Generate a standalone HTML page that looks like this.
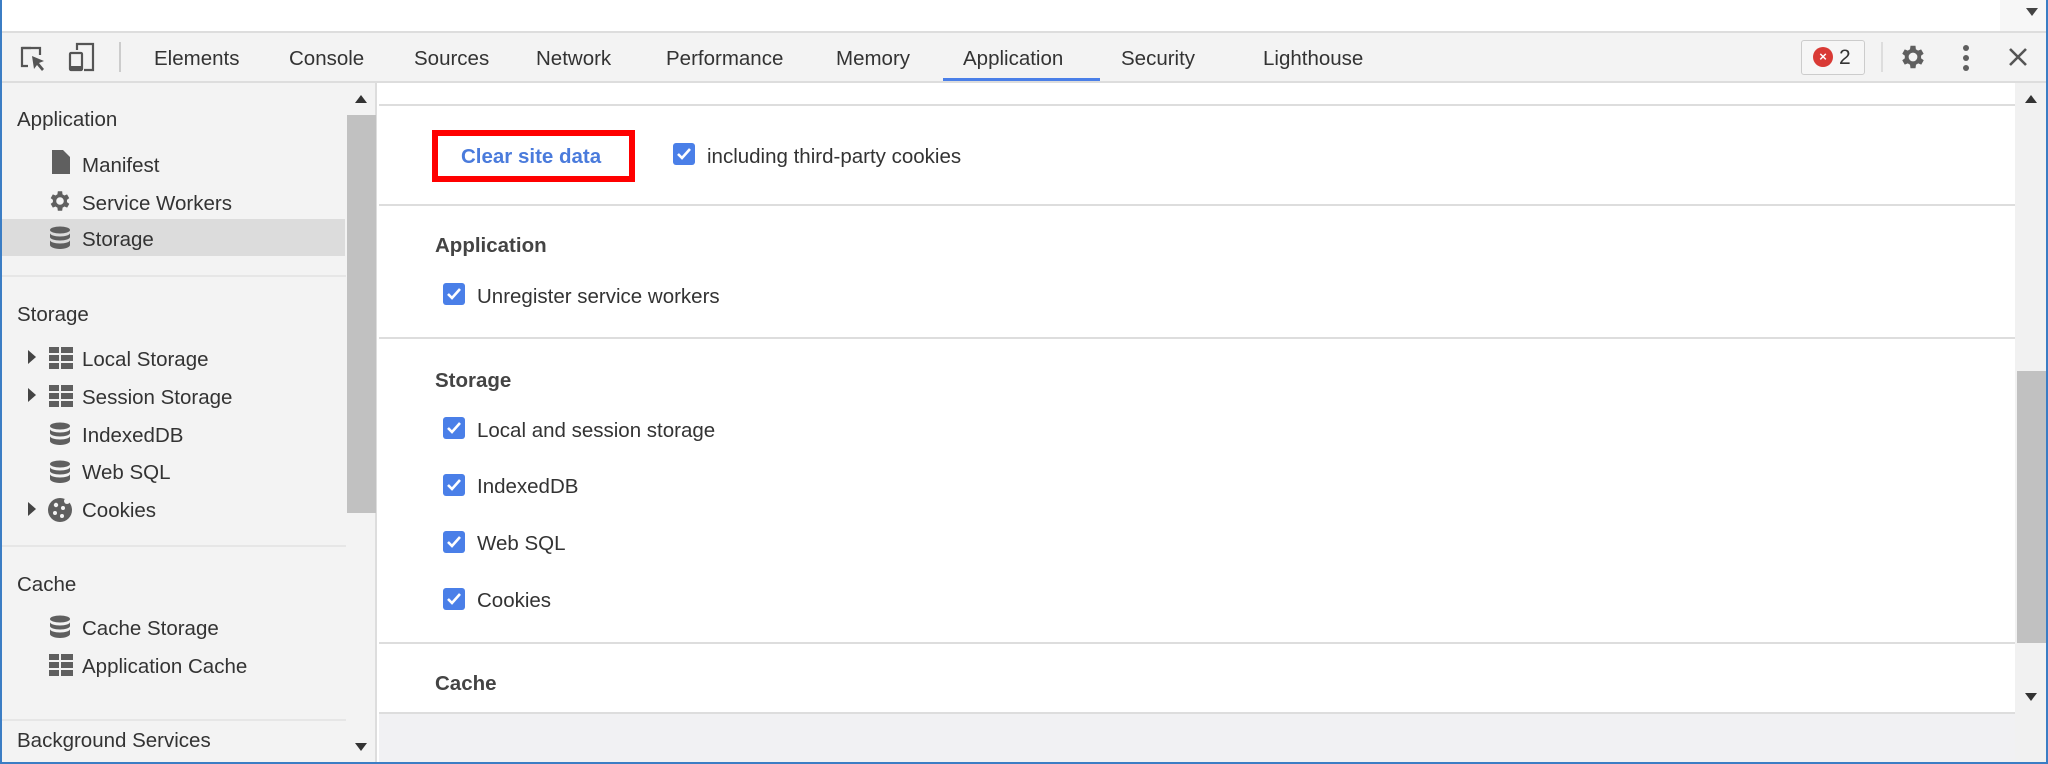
<!DOCTYPE html>
<html><head><meta charset="utf-8"><style>
*{box-sizing:border-box;margin:0;padding:0}
body{width:2048px;height:764px;overflow:hidden;background:#fff;font-family:"Liberation Sans",sans-serif;color:#333;position:relative}
.abs{position:absolute}
.t{position:absolute;white-space:nowrap;font-size:20.5px;line-height:24px;margin-top:2px}
.tab{position:absolute;top:47px;font-size:20.5px;color:#333;white-space:nowrap}
.side{position:absolute;font-size:20.5px;color:#333;white-space:nowrap;line-height:24px;margin-top:2px}
.cb{position:absolute;width:22px;height:22px;background:#4a7fe8;border-radius:3px}
.cb svg{position:absolute;left:3px;top:3px}
.h{position:absolute;font-weight:bold;font-size:20.5px;color:#444;margin-top:2px}
.hr{position:absolute;left:379px;width:1636px;height:2px;background:#ddd}
.sep{position:absolute;left:0;width:346px;height:2px;background:#e6e6e6}
</style></head><body>
<div class="abs" style="left:0;top:0;width:2048px;height:31px;background:#fff"></div>
<div class="abs" style="left:2000px;top:0;width:46px;height:31px;background:#f7f7f7"></div>
<svg class="abs" style="left:2025px;top:7px" width="14" height="10"><path d="M1 1h12L7 9z" fill="#444"/></svg>
<div class="abs" style="left:0;top:31px;width:2048px;height:52px;background:#f3f3f3;border-top:2px solid #ddd;border-bottom:2px solid #ddd"></div>
<svg class="abs" style="left:19px;top:44px" width="30" height="30" viewBox="0 0 30 30"><path d="M12 4H3v18h6" fill="none" stroke="#555" stroke-width="2.2"/><path d="M3 4h18v7" fill="none" stroke="#555" stroke-width="2.2"/><path d="M13 12l12 5-5 2 5 6-2 2-5-6-3 4z" fill="#555"/></svg>
<svg class="abs" style="left:66px;top:41px" width="32" height="32" viewBox="0 0 32 32"><path d="M11 9V3h16v26H18" fill="none" stroke="#555" stroke-width="2.2"/><rect x="4" y="12" width="12" height="17" rx="1" fill="none" stroke="#555" stroke-width="2.2"/><rect x="5" y="25" width="10" height="3" fill="#555"/></svg>
<div class="abs" style="left:119px;top:42px;width:2px;height:30px;background:#ccc"></div>
<div class="tab" style="left:154px">Elements</div>
<div class="tab" style="left:289px">Console</div>
<div class="tab" style="left:414px">Sources</div>
<div class="tab" style="left:536px">Network</div>
<div class="tab" style="left:666px">Performance</div>
<div class="tab" style="left:836px">Memory</div>
<div class="tab" style="left:963px">Application</div>
<div class="tab" style="left:1121px">Security</div>
<div class="tab" style="left:1263px">Lighthouse</div>
<div class="abs" style="left:943px;top:78px;width:157px;height:3px;background:#4a7fe8"></div>
<div class="abs" style="left:1801px;top:40px;width:64px;height:35px;border:1px solid #ccc;border-radius:3px;background:#f6f6f6"></div>
<div class="abs" style="left:1813px;top:47px;width:20px;height:20px;border-radius:50%;background:#d93a35;color:#fff;font-size:13px;line-height:20px;text-align:center;font-weight:bold">×</div>
<div class="abs" style="left:1839px;top:46px;font-size:21px;color:#333">2</div>
<div class="abs" style="left:1881px;top:42px;width:2px;height:30px;background:#ddd"></div>
<svg class="abs" style="left:1898px;top:42px" width="30" height="30" viewBox="0 0 24 24"><path fill="#5f5f5f" d="M19.4 13a7.5 7.5 0 000-2l2.1-1.6-2-3.5-2.5 1a7.3 7.3 0 00-1.700-1L15 3h-4l-.4 2.9a7.3 7.3 0 00-1.7 1l-2.5-1-2 3.5L6.5 11a7.5 7.5 0 000 2l-2.1 1.6 2 3.5 2.5-1a7.3 7.3 0 001.7 1L11 21h4l.4-2.9a7.3 7.3 0 001.7-1l2.5 1 2-3.5zM13 15.5a3.5 3.5 0 110-7 3.5 3.5 0 010 7z" transform="translate(-1 0)"/></svg>
<div class="abs" style="left:1963px;top:45px;width:6px;height:6px;border-radius:50%;background:#5f5f5f;box-shadow:0 10px 0 #5f5f5f,0 20px 0 #5f5f5f"></div>
<svg class="abs" style="left:2008px;top:47px" width="20" height="20"><path d="M2 2l16 16M18 2L2 18" stroke="#555" stroke-width="2.6"/></svg>
<div class="abs" style="left:0;top:83px;width:346px;height:681px;background:#f3f3f3"></div>
<div class="abs" style="left:346px;top:83px;width:31px;height:681px;background:#f3f3f3;border-right:2px solid #ddd"></div>
<div class="abs" style="left:347px;top:115px;width:29px;height:398px;background:#c1c1c1"></div>
<svg class="abs" style="left:354px;top:94px" width="14" height="10"><path d="M1 9h12L7 1z" fill="#333"/></svg>
<svg class="abs" style="left:354px;top:742px" width="14" height="10"><path d="M1 1h12L7 9z" fill="#333"/></svg>
<div class="abs" style="left:0;top:219px;width:345px;height:37px;background:#dcdcdc"></div>
<div class="side" style="left:17px;top:106px">Application</div>
<svg class="abs" style="left:51px;top:149px" width="20" height="26"><path d="M1 1h11l7 7v17H1z" fill="#5f5f5f"/></svg>
<div class="side" style="left:82px;top:152px">Manifest</div>
<svg class="abs" style="left:47px;top:188px" width="26" height="26" viewBox="0 0 24 24"><path fill="#5f5f5f" d="M19.4 13a7.5 7.5 0 000-2l2.1-1.6-2-3.5-2.5 1a7.3 7.3 0 00-1.7-1L15 3h-4l-.4 2.9a7.3 7.3 0 00-1.7 1l-2.5-1-2 3.5L6.5 11a7.5 7.5 0 000 2l-2.1 1.6 2 3.5 2.5-1a7.3 7.3 0 001.7 1L11 21h4l.4-2.9a7.3 7.3 0 001.7-1l2.5 1 2-3.5zM13 15.5a3.5 3.5 0 110-7 3.5 3.5 0 010 7z" transform="translate(-1 0)"/></svg>
<div class="side" style="left:82px;top:190px">Service Workers</div>
<svg class="abs" style="left:49px;top:226px" width="22" height="24" viewBox="0 0 22 24"><ellipse cx="11" cy="4" rx="10" ry="3.5" fill="#5f5f5f"/><path d="M1 7c0 2 4.5 3.5 10 3.5S21 9 21 7v4c0 2-4.5 3.5-10 3.5S1 13 1 11zM1 14c0 2 4.5 3.5 10 3.5S21 16 21 14v5c0 2-4.5 4-10 4S1 21 1 19z" fill="#5f5f5f"/></svg>
<div class="side" style="left:82px;top:226px">Storage</div>
<div class="sep" style="top:275px"></div>
<div class="side" style="left:17px;top:301px">Storage</div>
<svg class="abs" style="left:27px;top:349px" width="10" height="16"><path d="M1 1l8 7-8 7z" fill="#444"/></svg>
<svg class="abs" style="left:49px;top:347px" width="24" height="22"><path d="M0 0h10v6H0zM12 0h12v6H12zM0 8h10v6H0zM12 8h12v6H12zM0 16h10v6H0zM12 16h12v6H12z" fill="#5f5f5f"/></svg>
<div class="side" style="left:82px;top:346px">Local Storage</div>
<svg class="abs" style="left:27px;top:387px" width="10" height="16"><path d="M1 1l8 7-8 7z" fill="#444"/></svg>
<svg class="abs" style="left:49px;top:385px" width="24" height="22"><path d="M0 0h10v6H0zM12 0h12v6H12zM0 8h10v6H0zM12 8h12v6H12zM0 16h10v6H0zM12 16h12v6H12z" fill="#5f5f5f"/></svg>
<div class="side" style="left:82px;top:384px">Session Storage</div>
<svg class="abs" style="left:49px;top:422px" width="22" height="24" viewBox="0 0 22 24"><ellipse cx="11" cy="4" rx="10" ry="3.5" fill="#5f5f5f"/><path d="M1 7c0 2 4.5 3.5 10 3.5S21 9 21 7v4c0 2-4.5 3.5-10 3.5S1 13 1 11zM1 14c0 2 4.5 3.5 10 3.5S21 16 21 14v5c0 2-4.5 4-10 4S1 21 1 19z" fill="#5f5f5f"/></svg>
<div class="side" style="left:82px;top:422px">IndexedDB</div>
<svg class="abs" style="left:49px;top:460px" width="22" height="24" viewBox="0 0 22 24"><ellipse cx="11" cy="4" rx="10" ry="3.5" fill="#5f5f5f"/><path d="M1 7c0 2 4.5 3.5 10 3.5S21 9 21 7v4c0 2-4.5 3.5-10 3.5S1 13 1 11zM1 14c0 2 4.5 3.5 10 3.5S21 16 21 14v5c0 2-4.5 4-10 4S1 21 1 19z" fill="#5f5f5f"/></svg>
<div class="side" style="left:82px;top:459px">Web SQL</div>
<svg class="abs" style="left:27px;top:501px" width="10" height="16"><path d="M1 1l8 7-8 7z" fill="#444"/></svg>
<svg class="abs" style="left:47px;top:497px" width="26" height="26" viewBox="0 0 26 26"><circle cx="13" cy="13" r="12" fill="#5f5f5f"/><circle cx="9" cy="8" r="2.2" fill="#f3f3f3"/><circle cx="16" cy="11" r="2" fill="#f3f3f3"/><circle cx="8" cy="16" r="2" fill="#f3f3f3"/><circle cx="15" cy="19" r="2" fill="#f3f3f3"/><circle cx="20" cy="4" r="3" fill="#f3f3f3"/></svg>
<div class="side" style="left:82px;top:497px">Cookies</div>
<div class="sep" style="top:545px"></div>
<div class="side" style="left:17px;top:571px">Cache</div>
<svg class="abs" style="left:49px;top:615px" width="22" height="24" viewBox="0 0 22 24"><ellipse cx="11" cy="4" rx="10" ry="3.5" fill="#5f5f5f"/><path d="M1 7c0 2 4.5 3.5 10 3.5S21 9 21 7v4c0 2-4.5 3.5-10 3.5S1 13 1 11zM1 14c0 2 4.5 3.5 10 3.5S21 16 21 14v5c0 2-4.5 4-10 4S1 21 1 19z" fill="#5f5f5f"/></svg>
<div class="side" style="left:82px;top:615px">Cache Storage</div>
<svg class="abs" style="left:49px;top:654px" width="24" height="22"><path d="M0 0h10v6H0zM12 0h12v6H12zM0 8h10v6H0zM12 8h12v6H12zM0 16h10v6H0zM12 16h12v6H12z" fill="#5f5f5f"/></svg>
<div class="side" style="left:82px;top:653px">Application Cache</div>
<div class="sep" style="top:719px"></div>
<div class="side" style="left:17px;top:727px">Background Services</div>
<div class="abs" style="left:379px;top:713px;width:1636px;height:51px;background:#f1f1f3"></div>
<div class="abs" style="left:2015px;top:83px;width:31px;height:681px;background:#f1f1f1"></div>
<div class="abs" style="left:2017px;top:371px;width:29px;height:272px;background:#c1c1c1"></div>
<svg class="abs" style="left:2024px;top:94px" width="14" height="10"><path d="M1 9h12L7 1z" fill="#333"/></svg>
<svg class="abs" style="left:2024px;top:692px" width="14" height="10"><path d="M1 1h12L7 9z" fill="#333"/></svg>
<div class="hr" style="top:104px"></div>
<div class="hr" style="top:204px"></div>
<div class="hr" style="top:337px"></div>
<div class="hr" style="top:642px"></div>
<div class="hr" style="top:712px"></div>
<div class="abs" style="left:432px;top:130px;width:203px;height:52px;border:6px solid #f00"></div>
<div class="t" style="left:461px;top:143px;font-weight:bold;color:#4a7bdc">Clear site data</div>
<div class="cb" style="left:673px;top:143px"><svg width="16" height="16"><path d="M2 8l4 4 8-9" fill="none" stroke="#fff" stroke-width="2.6"/></svg></div>
<div class="t" style="left:707px;top:143px">including third-party cookies</div>
<div class="h" style="left:435px;top:232px">Application</div>
<div class="cb" style="left:443px;top:283px"><svg width="16" height="16"><path d="M2 8l4 4 8-9" fill="none" stroke="#fff" stroke-width="2.6"/></svg></div>
<div class="t" style="left:477px;top:283px">Unregister service workers</div>
<div class="h" style="left:435px;top:367px">Storage</div>
<div class="cb" style="left:443px;top:417px"><svg width="16" height="16"><path d="M2 8l4 4 8-9" fill="none" stroke="#fff" stroke-width="2.6"/></svg></div>
<div class="t" style="left:477px;top:417px">Local and session storage</div>
<div class="cb" style="left:443px;top:474px"><svg width="16" height="16"><path d="M2 8l4 4 8-9" fill="none" stroke="#fff" stroke-width="2.6"/></svg></div>
<div class="t" style="left:477px;top:473px">IndexedDB</div>
<div class="cb" style="left:443px;top:531px"><svg width="16" height="16"><path d="M2 8l4 4 8-9" fill="none" stroke="#fff" stroke-width="2.6"/></svg></div>
<div class="t" style="left:477px;top:530px">Web SQL</div>
<div class="cb" style="left:443px;top:588px"><svg width="16" height="16"><path d="M2 8l4 4 8-9" fill="none" stroke="#fff" stroke-width="2.6"/></svg></div>
<div class="t" style="left:477px;top:587px">Cookies</div>
<div class="h" style="left:435px;top:670px">Cache</div>
<div class="abs" style="left:0;top:0;width:2px;height:764px;background:#3b7dc4"></div>
<div class="abs" style="left:2046px;top:0;width:2px;height:764px;background:#3b7dc4"></div>
<div class="abs" style="left:0;top:762px;width:2048px;height:2px;background:#3b7dc4"></div>
</body></html>
